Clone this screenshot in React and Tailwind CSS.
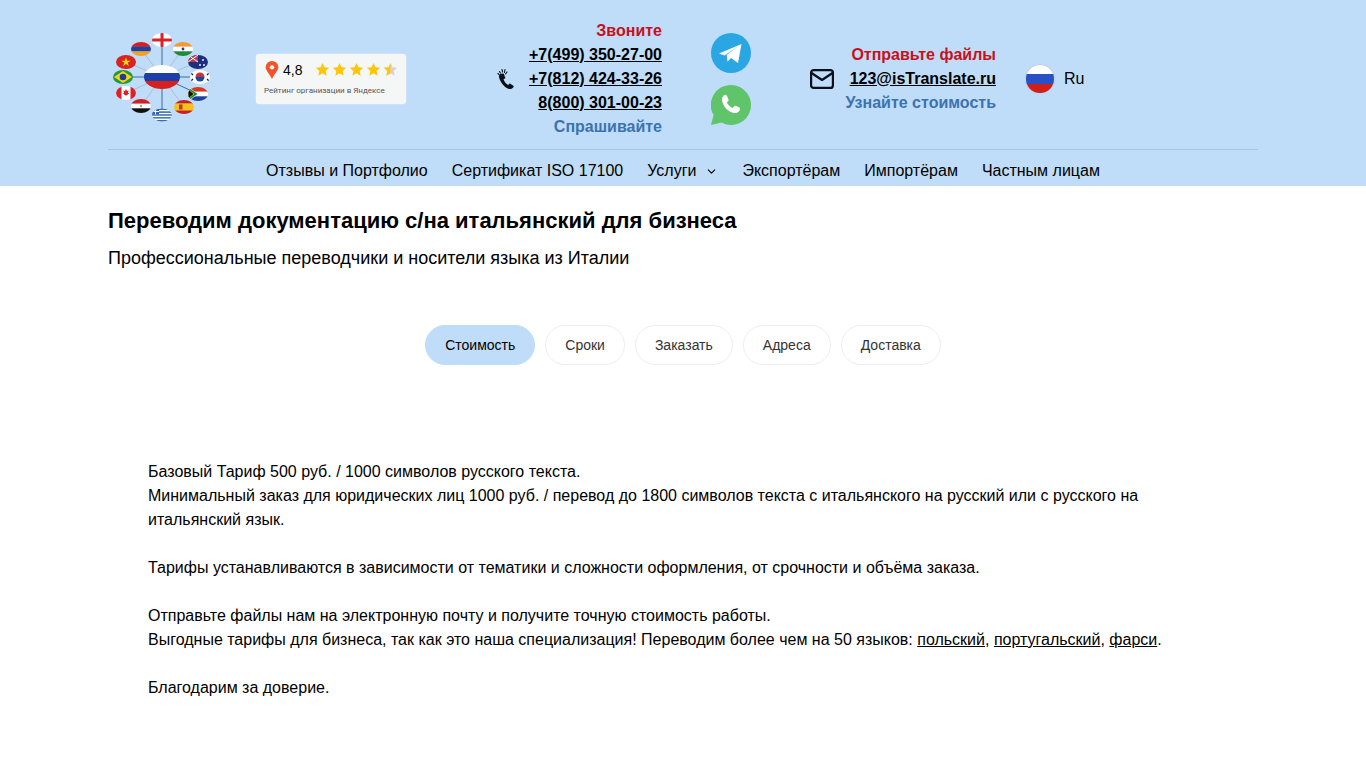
import React from 'react';
import { ChevronDown } from 'lucide-react';

const navItems = ['Отзывы и Портфолио', 'Сертификат ISO 17100', 'Услуги', 'Экспортёрам', 'Импортёрам', 'Частным лицам'];
const tabs = ['Стоимость', 'Сроки', 'Заказать', 'Адреса', 'Доставка'];

const spokes = [
  [52, 7], [73, 16], [88, 29], [90, 44], [88, 61], [74, 74], [52, 82], [31, 73], [16, 60], [13, 44], [16, 29], [31, 16],
];

// one round flag of the logo, stripes are given top to bottom
const Flag = ({ id, cx, cy, rx = 10, ry = 7, stripes, children }) => (
  <g>
    <clipPath id={id}>
      <ellipse cx={cx} cy={cy} rx={rx} ry={ry} />
    </clipPath>
    <g clipPath={`url(#${id})`}>
      {stripes.map((c, i) => (
        <rect key={i} x={cx - rx} y={cy - ry + (i * 2 * ry) / stripes.length} width={rx * 2} height={(2 * ry) / stripes.length + 0.2} fill={c} />
      ))}
      {children}
    </g>
  </g>
);

const Logo = () => (
  <svg width="104" height="92" viewBox="0 0 104 92" className="shrink-0">
    {spokes.map(([x, y], i) => (
      <line key={i} x1="52" y1="44" x2={x} y2={y} stroke={i === 0 || i === 6 || i === 3 || i === 9 || i === 4 ? '#3f6f97' : '#a9c0d6'} strokeWidth="1" />
    ))}
    <Flag id="ru" cx={52} cy={44} rx={18} ry={12} stripes={['#ffffff', '#1c3fa8', '#d5201f']} />
    <Flag id="ge" cx={52} cy={7} stripes={['#ffffff']}>
      <rect x="50.5" y="0" width="3" height="14" fill="#d8232a" />
      <rect x="42" y="5.5" width="20" height="3" fill="#d8232a" />
    </Flag>
    <Flag id="in" cx={73} cy={16} stripes={['#f59a33', '#ffffff', '#1f8a3b']}>
      <circle cx="73" cy="16" r="1.4" fill="#1c3f94" />
    </Flag>
    <Flag id="au" cx={88} cy={29} stripes={['#1d2f7d']}>
      <rect x="78" y="22" width="10" height="7" fill="#c0394b" />
      <path d="M78 22l10 7M88 22l-10 7" stroke="#ffffff" strokeWidth="1" />
      <circle cx="93" cy="27" r="0.9" fill="#fff" />
      <circle cx="90" cy="32" r="0.9" fill="#fff" />
      <circle cx="94" cy="32" r="0.9" fill="#fff" />
    </Flag>
    <Flag id="kr" cx={90} cy={44} stripes={['#ffffff']}>
      <path d="M85.5 44a4.5 4.5 0 0 1 9 0z" fill="#cd2e3a" />
      <path d="M85.5 44a4.5 4.5 0 0 0 9 0z" fill="#0f4fa0" />
      <path d="M81 40l2 2M81 48l2-2M99 40l-2 2M99 48l-2-2" stroke="#222" strokeWidth="1.2" />
    </Flag>
    <Flag id="za" cx={88} cy={61} stripes={['#d9381e', '#ffffff', '#1f3f9a']}>
      <path d="M78 54l10 7h10v0H88l-10 7z" fill="#0f8a4b" stroke="#ffffff" strokeWidth="0.6" />
      <path d="M78 56l6 5-6 5z" fill="#111" stroke="#f4b81c" strokeWidth="0.8" />
    </Flag>
    <Flag id="es" cx={74} cy={74} stripes={['#c9201f', '#f6c21c', '#f6c21c', '#c9201f']}>
      <rect x="69" y="71.5" width="3.5" height="5" fill="#b3411f" />
    </Flag>
    <Flag id="gr" cx={52} cy={82} ry={6.5} stripes={['#2f66ac', '#ffffff', '#2f66ac', '#ffffff', '#2f66ac', '#ffffff', '#2f66ac', '#ffffff', '#2f66ac']}>
      <rect x="42" y="75.5" width="7" height="6" fill="#2f66ac" />
      <path d="M45.5 75.5v6M42 78.5h7" stroke="#ffffff" strokeWidth="1" />
    </Flag>
    <Flag id="eg" cx={31} cy={73} stripes={['#cf1f2b', '#ffffff', '#111111']}>
      <circle cx="31" cy="73" r="1.2" fill="#c2a23a" />
    </Flag>
    <Flag id="ca" cx={16} cy={60} stripes={['#ffffff']}>
      <rect x="6" y="53" width="5.5" height="14" fill="#d8232a" />
      <rect x="20.5" y="53" width="5.5" height="14" fill="#d8232a" />
      <path d="M16 56l1 2 1.6-.6-.6 2.6 1.2.4-3.2 2.4-3.2-2.4 1.2-.4-.6-2.6 1.6.6z" fill="#d8232a" />
    </Flag>
    <Flag id="br" cx={13} cy={44} stripes={['#1f9a3f']}>
      <path d="M13 38l9 6-9 6-9-6z" fill="#f5d31c" />
      <circle cx="13" cy="44" r="3.3" fill="#1c3f94" />
    </Flag>
    <Flag id="vn" cx={16} cy={29} stripes={['#d8231f']}>
      <path d="M16 24.5l1.2 3.3h3.4l-2.8 2 1.1 3.4-2.9-2.1-2.9 2.1 1.1-3.4-2.8-2h3.4z" fill="#f6d31c" />
    </Flag>
    <Flag id="am" cx={31} cy={16} stripes={['#d5201f', '#1c3fa8', '#f2a31c']} />
  </svg>
);

const Star = ({ half }) => (
  <svg width="15" height="15" viewBox="0 0 24 24">
    <path d="M12 1.5l3.2 6.9 7.5.9-5.6 5.1 1.5 7.4L12 18.1l-6.6 3.7 1.5-7.4L1.3 9.3l7.5-.9z" fill={half ? '#d4d4d4' : '#fdc60b'} />
    {half && <path d="M12 1.5v16.6l-6.6 3.7 1.5-7.4L1.3 9.3l7.5-.9z" fill="#fdc60b" />}
  </svg>
);

const RatingCard = () => (
  <div className="ml-[42px] flex h-[50px] w-[150px] shrink-0 flex-col rounded-[3px] bg-[#f5f6f6] pl-2 pt-[6px] shadow-[0_0_2px_rgba(255,255,255,0.6)]">
    <div className="flex h-5 items-center">
      <svg width="16" height="18" viewBox="0 0 16 20">
        <path d="M8 0a7 7 0 0 1 7 7c0 4-4 6.500-7 13C5 13.500 1 11 1 7a7 7 0 0 1 7-7z" fill="#f0532b" />
        <circle cx="8" cy="7" r="2.400" fill="#ffffff" />
      </svg>
      <span className="ml-[3px] text-sm leading-5 text-black">4,8</span>
      <div className="ml-[13px] flex gap-[2px]">
        <Star />
        <Star />
        <Star />
        <Star />
        <Star half />
      </div>
    </div>
    <div className="mt-[5px] text-[8px] leading-3 whitespace-nowrap text-[#555555] font-['Roboto',sans-serif]">Рейтинг организации в Яндексе</div>
  </div>
);

const PhoneIcon = () => (
  <svg width="18" height="22" viewBox="0 0 18 22" className="shrink-0">
    <path d="M2.500 6.500C1.500 8 2 10.500 4 14c2 3.500 5.500 6.500 8.500 7 1.500.2 3-.5 4-2 .3-.5.2-.9-.2-1.200l-3-2c-.4-.3-.8-.2-1.100.1l-1 1.200c-2-1-4-3.500-4.700-5.800l1.300-.7c.4-.2.500-.6.400-1L7 6.200c-.2-.5-.6-.7-1.100-.6-1.300.1-2.500.3-3.400.9z" fill="#0a0f1a" />
    <path d="M2.500 3.500L3.500 5M5 1.500L5.600 4M8 1.500L7.500 4.500M10 4L8.500 6M1 5.500l1 1" stroke="#0a0f1a" strokeWidth="1.100" strokeLinecap="round" />
  </svg>
);

const TelegramIcon = () => (
  <svg width="40" height="40" viewBox="0 0 40 40">
    <circle cx="20" cy="20" r="20" fill="#2aa7e3" />
    <path d="M8 20.500L30.500 11 27 30l-7-5-3.500 3.500-.8-6.500L27 13.500 13.500 22.500z" fill="#ffffff" />
  </svg>
);

const WhatsappIcon = () => (
  <svg width="40" height="40" viewBox="0 0 40 40">
    <path d="M20 0a20 20 0 1 1-9.500 37.600L0 40l2.600-9.900A20 20 0 0 1 20 0z" fill="#5fc46a" />
    <path d="M14.500 10c.8 0 1.200.3 1.500 1l1.500 3.500c.2.600.1 1-.3 1.500l-1.300 1.500c1.200 2.500 3.200 4.400 5.800 5.600l1.600-1.900c.4-.5.900-.6 1.500-.4l3.500 1.700c.6.3.8.7.7 1.300-.2 2.500-2.300 4.200-4.800 4.200-6.500 0-13-7-13.200-13.500 0-2.300 1.300-4.200 3.500-5z" fill="#ffffff" />
  </svg>
);

const MailIcon = () => (
  <svg width="24" height="20" viewBox="0 0 24 20" fill="none" stroke="#0a0f1a" strokeWidth="2.200" strokeLinejoin="round" strokeLinecap="round" className="shrink-0">
    <rect x="1.100" y="1.100" width="21.800" height="17.800" rx="2.500" />
    <path d="M1.500 4L12 11l10.500-7" />
  </svg>
);

const RuFlag = () => (
  <div className="flex h-7 w-7 shrink-0 flex-col overflow-hidden rounded-full shadow-[0_0_1px_rgba(120,80,60,0.6)]">
    <div className="h-[9px] bg-white" />
    <div className="h-[10px] bg-[#2a50c8]" />
    <div className="h-[9px] bg-[#cf1f17]" />
  </div>
);

export default function App() {
  return (
    <div className="min-h-[768px] bg-white font-['Liberation_Sans',Arial,sans-serif] text-black">
      <header className="bg-[#bfdcf8]">
        <div className="mx-auto w-[1150px]">
          <div className="flex h-[150px] items-center border-b border-[#a9c4de] pt-[8px]">
            <div className="ml-[2px]">
              <Logo />
            </div>
            <RatingCard />
            <div className="ml-[91px] shrink-0">
              <PhoneIcon />
            </div>
            <div className="ml-[14px] flex w-[133px] shrink-0 flex-col items-end text-base leading-6 font-bold whitespace-nowrap">
              <span className="text-[#c8101c]">Звоните</span>
              <a className="underline" href="#">+7(499) 350-27-00</a>
              <a className="underline" href="#">+7(812) 424-33-26</a>
              <a className="underline" href="#">8(800) 301-00-23</a>
              <span className="text-[#3d72b0]">Спрашивайте</span>
            </div>
            <div className="ml-[49px] flex shrink-0 flex-col gap-3">
              <TelegramIcon />
              <WhatsappIcon />
            </div>
            <div className="ml-[59px]">
              <MailIcon />
            </div>
            <div className="flex w-[162px] shrink-0 flex-col items-end text-base leading-6 font-bold whitespace-nowrap">
              <span className="text-[#c8101c]">Отправьте файлы</span>
              <a className="underline" href="#">123@isTranslate.ru</a>
              <span className="text-[#3d72b0]">Узнайте стоимость</span>
            </div>
            <div className="ml-[30px]">
              <RuFlag />
            </div>
            <span className="ml-[10px] text-base">Ru</span>
          </div>
          <nav className="flex h-[36px] items-center justify-center gap-6 pt-[6px] text-base leading-6">
            {navItems.map((item) =>
              item === 'Услуги' ? (
                <span key={item} className="flex items-center gap-[9px]">
                  {item}
                  <ChevronDown size={13} strokeWidth={2} />
                </span>
              ) : (
                <a key={item} href="#">{item}</a>
              ),
            )}
          </nav>
        </div>
      </header>

      <main className="mx-auto w-[1150px]">
        <h1 className="mt-[21px] text-[22px] leading-7 font-bold">Переводим документацию с/на итальянский для бизнеса</h1>
        <h2 className="mt-[11px] text-lg leading-6">Профессиональные переводчики и носители языка из Италии</h2>

        <div className="mt-[55px] flex justify-center gap-[10px]">
          {tabs.map((tab, i) => (
            <button
              key={tab}
              className={
                i === 0
                  ? 'h-10 rounded-[20px] border border-[#bfdcf8] bg-[#bfdcf8] px-[19px] text-sm text-black'
                  : 'h-10 rounded-[20px] border border-[#eeeeee] bg-white px-[19px] text-sm text-[#333333]'
              }
            >
              {tab}
            </button>
          ))}
        </div>

        <div className="mt-[95px] px-10 text-base leading-6">
          <p>Базовый Тариф 500 руб. / 1000 символов русского текста.</p>
          <p>Минимальный заказ для юридических лиц 1000 руб. / перевод до 1800 символов текста с итальянского на русский или с русского на итальянский язык.</p>
          <p className="mt-6">Тарифы устанавливаются в зависимости от тематики и сложности оформления, от срочности и объёма заказа.</p>
          <p className="mt-6">Отправьте файлы нам на электронную почту и получите точную стоимость работы.</p>
          <p>
            Выгодные тарифы для бизнеса, так как это наша специализация! Переводим более чем на 50 языков:{' '}
            <a className="underline" href="#">польский</a>, <a className="underline" href="#">португальский</a>, <a className="underline" href="#">фарси</a>.
          </p>
          <p className="mt-6">Благодарим за доверие.</p>
        </div>
      </main>
    </div>
  );
}
